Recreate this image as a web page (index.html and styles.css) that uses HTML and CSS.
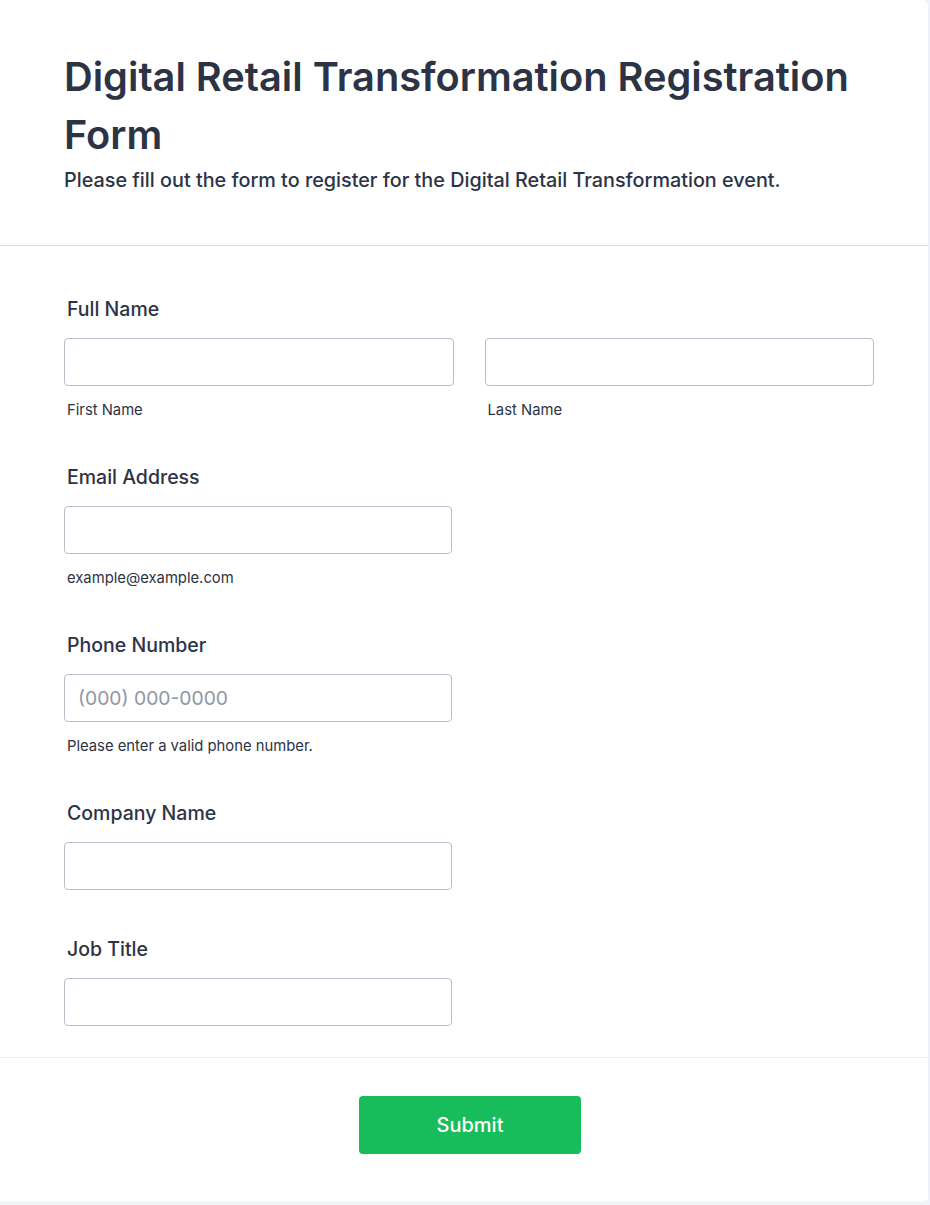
FILE: index.html
```html
<!DOCTYPE html>
<html lang="en">
<head>
    <meta charset="UTF-8">
    <meta name="viewport" content="width=device-width, initial-scale=1.0">
    <title>Digital Retail Transformation Registration Form</title>
    <link rel="stylesheet" href="styles.css">
</head>
<body>
    <div class="form-card">
        <!-- Шапка формы -->
        <div class="form-header">
            <h1 class="form-title">Digital Retail Transformation Registration Form</h1>
            <p class="form-subtitle">Please fill out the form to register for the Digital Retail Transformation event.</p>
        </div>

        <!-- Поля формы -->
        <form class="form-body" onsubmit="return false;">
            <div class="field">
                <label class="field-label">Full Name</label>
                <div class="field-row">
                    <div class="field-col">
                        <input type="text" class="field-input">
                        <span class="field-sublabel">First Name</span>
                    </div>
                    <div class="field-col">
                        <input type="text" class="field-input">
                        <span class="field-sublabel">Last Name</span>
                    </div>
                </div>
            </div>

            <div class="field">
                <label class="field-label">Email Address</label>
                <div class="field-col narrow">
                    <input type="email" class="field-input">
                    <span class="field-sublabel">example@example.com</span>
                </div>
            </div>

            <div class="field">
                <label class="field-label">Phone Number</label>
                <div class="field-col narrow">
                    <input type="tel" class="field-input" placeholder="(000) 000-0000">
                    <span class="field-sublabel">Please enter a valid phone number.</span>
                </div>
            </div>

            <div class="field">
                <label class="field-label">Company Name</label>
                <div class="field-col narrow">
                    <input type="text" class="field-input">
                </div>
            </div>

            <div class="field">
                <label class="field-label">Job Title</label>
                <div class="field-col narrow">
                    <input type="text" class="field-input">
                </div>
            </div>
        </form>

        <!-- Кнопка отправки -->
        <div class="form-footer">
            <button type="button" class="submit-button">Submit</button>
        </div>
    </div>
</body>
</html>
```

FILE: styles.css
```css
/* Основные стили */
body {
    margin: 0;
    padding: 0;
    background-color: #f3f3fe;
    font-family: 'Inter', 'Noto Sans', Arial, sans-serif;
    color: #2c3345;
}

/* Карточка формы */
.form-card {
    width: 928px;
    background-color: #ffffff;
    border-right: 1px solid #eceef3;
    border-bottom: 1px solid #eceef3;
    border-radius: 0 6px 6px 0;
}

/* Шапка */
.form-header {
    padding: 48px 64px 51px 64px;
    border-bottom: 1px solid #d8dae6;
}

.form-title {
    margin: 0;
    font-size: 39.75px;
    line-height: 58px;
    font-weight: 600;
    color: #2c3345;
    max-width: 800px;
}

.form-subtitle {
    margin: 2px 0 0 0;
    font-size: 19.8px;
    line-height: 28px;
    font-weight: 500;
    color: #2c3345;
}

/* Тело формы */
.form-body {
    padding: 50px 54px 31px 64px;
    display: flex;
    flex-direction: column;
    gap: 46px;
}

.field {
    display: flex;
    flex-direction: column;
}

.field-label {
    font-size: 19.5px;
    line-height: 24px;
    font-weight: 500;
    padding-left: 3px;
    margin-top: 1px;
    margin-bottom: 17px;
}

.field-row {
    display: flex;
    gap: 31px;
}

.field-col {
    display: flex;
    flex-direction: column;
    width: 390px;
}

.field-col.narrow {
    width: 388px;
}

.field-input {
    box-sizing: border-box;
    width: 100%;
    height: 48px;
    border: 1px solid #b8bdc9;
    border-radius: 4px;
    padding: 0 13px;
    font-family: 'Inter', 'Noto Sans', Arial, sans-serif;
    font-size: 19.3px;
    color: #2c3345;
    background-color: #ffffff;
    outline: none;
}

.field-input::placeholder {
    color: #8f96a3;
}

.field-sublabel {
    margin-top: 17px;
    padding-left: 3px;
    font-size: 14.8px;
    line-height: 15px;
    color: #2c3345;
}

/* Футер с кнопкой */
.form-footer {
    border-top: 1px solid #eceef3;
    padding: 38px 0 48px 0;
    display: flex;
    justify-content: center;
}

.submit-button {
    width: 222px;
    height: 58px;
    margin-left: 12px;
    border: none;
    border-radius: 4px;
    background-color: #18bd5b;
    color: #ffffff;
    font-family: 'Inter', 'Noto Sans', Arial, sans-serif;
    font-size: 20px;
    font-weight: 500;
    cursor: pointer;
}
```
